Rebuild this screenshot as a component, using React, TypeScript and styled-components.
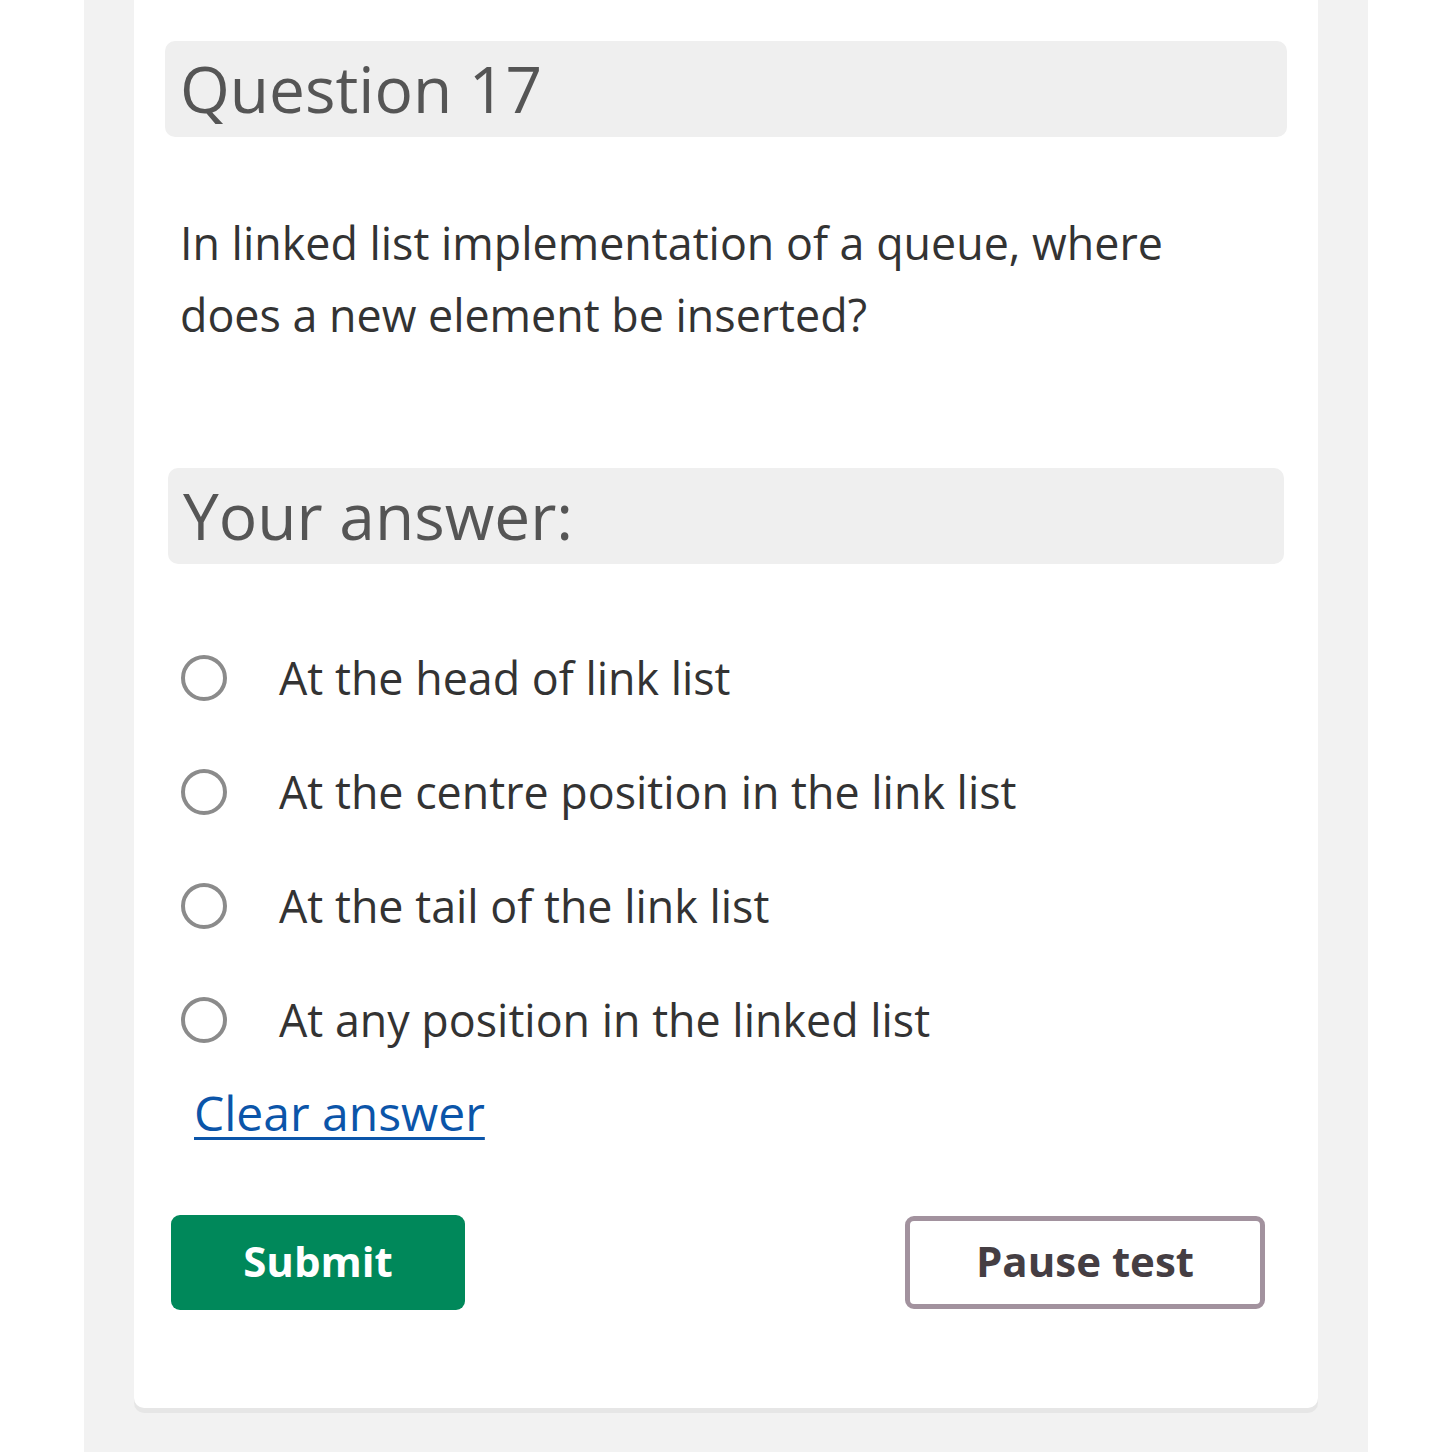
import styled, { createGlobalStyle } from 'styled-components';

const GlobalStyle = createGlobalStyle`
  html, body {
    margin: 0;
    padding: 0;
    background: #ffffff;
  }
  body {
    font-family: 'Open Sans', 'Noto Sans', sans-serif;
  }
`;

const options = [
  'At the head of link list',
  'At the centre position in the link list',
  'At the tail of the link list',
  'At any position in the linked list',
];

function App() {
  return (
    <>
      <GlobalStyle />
      <Page>
        <Card>
          <Heading>Question 17</Heading>
          <QuestionText>
            In linked list implementation of a queue, where
            <br />
            does a new element be inserted?
          </QuestionText>
          <AnswerHeading>Your answer:</AnswerHeading>
          <OptionList>
            {options.map((text) => (
              <OptionRow key={text}>
                <Radio type="radio" name="answer" />
                <OptionLabel>{text}</OptionLabel>
              </OptionRow>
            ))}
          </OptionList>
          <ClearLink href="#">Clear answer</ClearLink>
          <ButtonRow>
            <SubmitButton type="button">Submit</SubmitButton>
            <PauseButton type="button">Pause test</PauseButton>
          </ButtonRow>
        </Card>
      </Page>
    </>
  );
}

export default App;

const Page = styled.div`
  width: 1284px;
  min-height: 1452px;
  margin-left: 84px;
  padding: 0 50px;
  box-sizing: border-box;
  background: #f2f2f2;
`;

const Card = styled.div`
  display: flex;
  flex-direction: column;
  align-items: flex-start;
  background: #ffffff;
  padding: 41px 31px 98px;
  border-radius: 0 0 10px 10px;
  box-shadow: 0 5px 0 #e6e6e6;
`;

const Heading = styled.h2`
  align-self: stretch;
  margin: 0;
  padding: 0 15px;
  height: 96px;
  background: #efefef;
  border-radius: 10px;
  color: #555555;
  font-size: 64px;
  font-weight: 400;
  line-height: 96px;
`;

const QuestionText = styled.p`
  margin: 70px 0 0;
  padding-left: 15px;
  color: #333333;
  font-size: 44.8px;
  line-height: 72px;
`;

const AnswerHeading = styled(Heading)`
  margin: 117px 3px 0;
`;

const OptionList = styled.div`
  display: flex;
  flex-direction: column;
  margin-top: 57px;
`;

const OptionRow = styled.label`
  display: flex;
  align-items: center;
  gap: 52px;
  height: 114px;
  padding-left: 16px;
`;

const Radio = styled.input`
  appearance: none;
  margin: 0;
  width: 46px;
  height: 46px;
  border: 4px solid #8b8b8b;
  border-radius: 50%;
  box-sizing: border-box;
  background: #ffffff;
`;

const OptionLabel = styled.span`
  color: #333333;
  font-size: 44.8px;
  line-height: 72px;
`;

const ClearLink = styled.a`
  margin-left: 29px;
  color: #0b55a9;
  font-size: 48px;
  line-height: 72px;
  text-decoration: underline;
  text-decoration-thickness: 3px;
  text-underline-offset: 6px;
`;

const ButtonRow = styled.div`
  align-self: stretch;
  display: flex;
  justify-content: space-between;
  align-items: center;
  margin-top: 66px;
  padding: 0 22px 0 6px;
`;

const SubmitButton = styled.button`
  width: 294px;
  height: 95px;
  padding: 0;
  border: none;
  border-radius: 9px;
  background: #00885a;
  color: #ffffff;
  font-family: 'Open Sans', sans-serif;
  font-size: 42px;
  font-weight: 700;
  line-height: 1;
  padding-bottom: 4px;
`;

const PauseButton = styled.button`
  width: 360px;
  height: 93px;
  border: 5px solid #a2929e;
  border-radius: 9px;
  background: #ffffff;
  color: #453e43;
  font-family: 'Open Sans', sans-serif;
  font-size: 42px;
  font-weight: 700;
  line-height: 1;
  padding: 0 0 4px;
`;
